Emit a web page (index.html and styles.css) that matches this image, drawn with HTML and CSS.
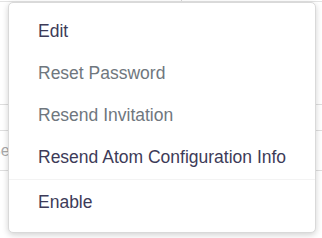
FILE: index.html
```html
<!DOCTYPE html>
<html lang="en">
<head>
    <meta charset="UTF-8">
    <meta name="viewport" content="width=device-width, initial-scale=1.0">
    <title>User actions</title>
    <link rel="stylesheet" href="styles.css">
</head>
<body>
    <!-- page behind the open menu -->
    <div class="page">
        <div class="head">
            <div class="head-cell"></div>
            <div class="head-cell"></div>
        </div>
        <div class="row row-tall"></div>
        <div class="row row-short"></div>
        <div class="row row-search">
            <span class="search-text">Search</span>
        </div>
    </div>

    <ul class="menu">
        <li class="menu-item">Edit</li>
        <li class="menu-item disabled">Reset Password</li>
        <li class="menu-item disabled">Resend Invitation</li>
        <li class="menu-item">Resend Atom Configuration Info</li>
        <li class="divider"></li>
        <li class="menu-item">Enable</li>
    </ul>
</body>
</html>
```

FILE: styles.css
```css
body {
    margin: 0;
    font-family: 'Liberation Sans', Arial, sans-serif;
    background: #fff;
    position: relative;
    height: 238px;
    overflow: hidden;
}

.page {
    display: flex;
    flex-direction: column;
}

.head {
    display: flex;
    height: 1px;
    border-bottom: 1px solid #e3e3e3;
}

.head-cell {
    width: 181px;
    border-right: 1px solid #d6d6d6;
}

.head-cell + .head-cell {
    flex: 1;
    border-right: none;
}

.row {
    border-bottom: 1px solid #dedede;
}

.row-tall {
    height: 102px;
}

.row-short {
    height: 25px;
}

.row-search {
    height: 39px;
    display: flex;
    align-items: center;
}

.search-text {
    margin-left: -10px;
    font-size: 16px;
    color: #a9a9a9;
}

.menu {
    position: absolute;
    top: 2px;
    left: 8px;
    width: 306px;
    margin: 0;
    padding: 7px 0 9px;
    list-style: none;
    background: #fff;
    border: 1px solid #d9d9d9;
    border-radius: 5px;
    box-shadow: 0 2px 6px rgba(0, 0, 0, 0.18);
}

.menu-item {
    padding: 9px 16px 9px 29px;
    font-size: 17.5px;
    line-height: 24px;
    white-space: nowrap;
    color: #3d3b58;
}

.menu-item.disabled {
    color: #6f777e;
}

.divider {
    height: 1px;
    margin: 1px 0;
    background: #f3f3f3;
}
```
